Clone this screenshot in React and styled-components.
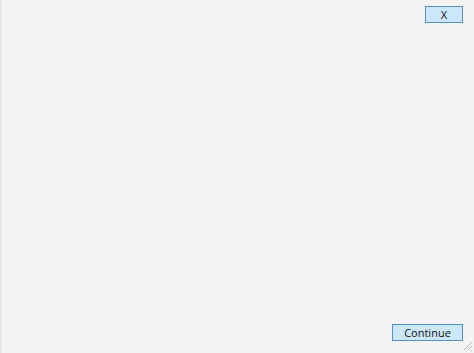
import React from "react";
import styled, { createGlobalStyle } from "styled-components";

const Global = createGlobalStyle`
  html, body { margin: 0; padding: 0; }
  body { background: #f4f4f4; font-family: "Open Sans", "Noto Sans", "Liberation Sans", sans-serif; }
`;

const Window = styled.div`
  position: relative;
  box-sizing: border-box;
  width: 474px;
  height: 353px;
  background: #f4f4f4;
  border-left: 2px solid #e4e7eb;
  display: flex;
  flex-direction: column;
  justify-content: space-between;
  padding: 6px 11px 12px 0;
`;

const Bar = styled.div`
  display: flex;
  justify-content: flex-end;
`;

const Button = styled.button`
  box-sizing: border-box;
  width: ${(p) => p.$w}px;
  height: ${(p) => p.$h}px;
  margin: 0;
  padding: 0;
  background: #cce6fa;
  border: 1px solid #5690c8;
  border-radius: 0;
  color: #111;
  font-family: "Open Sans", "Noto Sans", "Liberation Sans", sans-serif;
  font-size: 11px;
  line-height: 1;
  display: flex;
  align-items: center;
  justify-content: center;
`;

const Grip = styled.svg`
  position: absolute;
  right: 1px;
  bottom: 1px;
`;

export default function App() {
  return (
    <>
      <Global />
      <Window>
        <Bar>
          <Button $w={38} $h={17}>X</Button>
        </Bar>
        <Bar>
          <Button $w={71} $h={17}>Continue</Button>
        </Bar>
        <Grip width="11" height="11" viewBox="0 0 11 11">
          <g fill="#b8b8b8">
            <rect x="9" y="1" width="1" height="1" />
            <rect x="8" y="2" width="1" height="1" />
            <rect x="7" y="3" width="1" height="1" />
            <rect x="6" y="4" width="1" height="1" />
            <rect x="5" y="5" width="1" height="1" />
            <rect x="4" y="6" width="1" height="1" />
            <rect x="3" y="7" width="1" height="1" />
            <rect x="2" y="8" width="1" height="1" />
            <rect x="9" y="5" width="1" height="1" />
            <rect x="8" y="6" width="1" height="1" />
            <rect x="7" y="7" width="1" height="1" />
            <rect x="6" y="8" width="1" height="1" />
            <rect x="9" y="9" width="1" height="1" />
          </g>
        </Grip>
      </Window>
    </>
  );
}
